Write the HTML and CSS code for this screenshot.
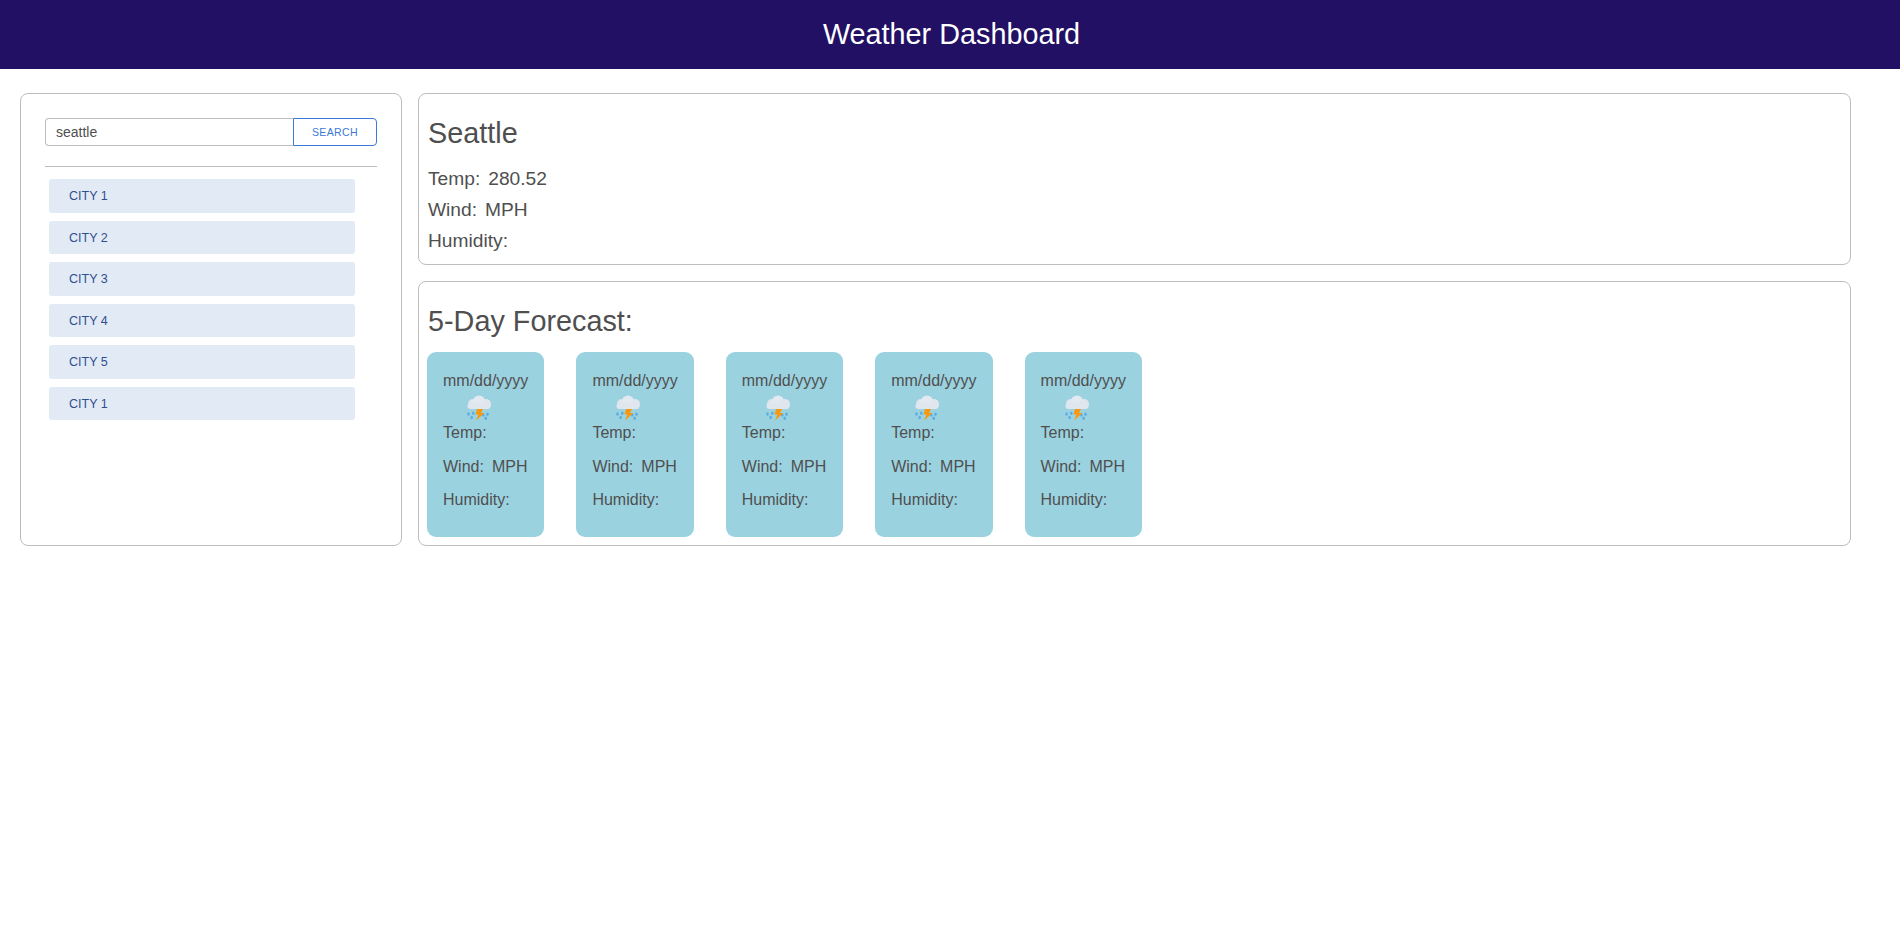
FILE: index.html
```html
<!DOCTYPE html>
<html lang="en">

<head>
    <meta charset="UTF-8">
    <meta name="viewport" content="width=device-width, initial-scale=1.0">
    <title>Weather Dashboard</title>
    <link rel="stylesheet" href="styles.css">
</head>

<body>
    <svg class="icon-defs" width="0" height="0" aria-hidden="true">
        <symbol id="storm" viewBox="0 0 26 26">
            <circle cx="7" cy="9" r="5" fill="#dfe6ee" />
            <circle cx="13" cy="6.500" r="6" fill="#e3e9f0" />
            <circle cx="20" cy="9" r="5" fill="#dfe6ee" />
            <rect x="1.500" y="8" width="23" height="6" rx="3" fill="#dfe6ee" />
            <ellipse cx="2.500" cy="19" rx="1.300" ry="1.700" fill="#5dade2" />
            <ellipse cx="7.300" cy="18.300" rx="1.300" ry="1.700" fill="#5dade2" />
            <ellipse cx="5.700" cy="22.500" rx="1.300" ry="1.700" fill="#5dade2" />
            <ellipse cx="17.300" cy="20" rx="1.300" ry="1.700" fill="#5dade2" />
            <ellipse cx="21.500" cy="19.300" rx="1.300" ry="1.700" fill="#5dade2" />
            <ellipse cx="19.700" cy="23.300" rx="1.300" ry="1.700" fill="#5dade2" />
            <path d="M11 14h6l-2 4h3.500l-8.500 7.500 2.500-6h-3z" fill="#f7980f" />
        </symbol>
    </svg>

    <header class="top-bar">
        <h1>Weather Dashboard</h1>
    </header>

    <main class="container">
        <aside class="panel search-panel">
            <form class="search-form">
                <input type="text" value="seattle">
                <button type="button">SEARCH</button>
            </form>
            <hr>
            <ul class="city-list">
                <li>CITY 1</li>
                <li>CITY 2</li>
                <li>CITY 3</li>
                <li>CITY 4</li>
                <li>CITY 5</li>
                <li>CITY 1</li>
            </ul>
        </aside>

        <section class="results">
            <div class="panel current">
                <h2>Seattle</h2>
                <p><span>Temp:</span> <span>280.52</span></p>
                <p><span>Wind:</span> <span>MPH</span></p>
                <p><span>Humidity:</span></p>
            </div>

            <div class="panel forecast">
                <h2>5-Day Forecast:</h2>
                <div class="day-list">
                    <div class="day-card">
                        <div class="day-date">mm/dd/yyyy</div>
                        <svg class="day-icon"><use href="#storm" /></svg>
                        <p>Temp:</p>
                        <p><span>Wind:</span> <span>MPH</span></p>
                        <p>Humidity:</p>
                    </div>
                    <div class="day-card">
                        <div class="day-date">mm/dd/yyyy</div>
                        <svg class="day-icon"><use href="#storm" /></svg>
                        <p>Temp:</p>
                        <p><span>Wind:</span> <span>MPH</span></p>
                        <p>Humidity:</p>
                    </div>
                    <div class="day-card">
                        <div class="day-date">mm/dd/yyyy</div>
                        <svg class="day-icon"><use href="#storm" /></svg>
                        <p>Temp:</p>
                        <p><span>Wind:</span> <span>MPH</span></p>
                        <p>Humidity:</p>
                    </div>
                    <div class="day-card">
                        <div class="day-date">mm/dd/yyyy</div>
                        <svg class="day-icon"><use href="#storm" /></svg>
                        <p>Temp:</p>
                        <p><span>Wind:</span> <span>MPH</span></p>
                        <p>Humidity:</p>
                    </div>
                    <div class="day-card">
                        <div class="day-date">mm/dd/yyyy</div>
                        <svg class="day-icon"><use href="#storm" /></svg>
                        <p>Temp:</p>
                        <p><span>Wind:</span> <span>MPH</span></p>
                        <p>Humidity:</p>
                    </div>
                </div>
            </div>
        </section>
    </main>
</body>

</html>
```

FILE: styles.css
```css
body {
    font-family: "Liberation Sans", Arial, sans-serif;
    margin: 0;
    padding: 0;
    background-color: #fff;
    color: #4f4f4f;
}

.icon-defs {
    display: block;
    height: 0;
}

.top-bar {
    height: 69px;
    padding-left: 3px;
    display: flex;
    justify-content: center;
    align-items: center;
    background-color: #211063;
}

.top-bar h1 {
    margin: 0;
    font-size: 28.800px;
    font-weight: 400;
    color: #fff;
}

.container {
    display: flex;
    gap: 16px;
    width: 1832px;
    margin: 24px 0 0 20px;
}

.panel {
    box-sizing: border-box;
    border: 1px solid #bdbdbd;
    border-radius: 8px;
    background-color: #fff;
}

.search-panel {
    width: 382px;
    height: 453px;
    padding: 24px;
}

.search-form {
    display: flex;
    height: 28px;
}

.search-form input {
    box-sizing: border-box;
    width: 248px;
    height: 28px;
    padding: 0 10px;
    border: 1px solid #bdbdbd;
    border-right: none;
    border-radius: 4px 0 0 4px;
    font-family: "Liberation Sans", Arial, sans-serif;
    font-size: 14px;
    color: #4f4f4f;
}

.search-form button {
    box-sizing: border-box;
    width: 84px;
    height: 28px;
    padding: 0;
    background-color: #fff;
    border: 1px solid #3c78d8;
    border-radius: 0 4px 4px 0;
    font-family: "Liberation Sans", Arial, sans-serif;
    font-size: 10.500px;
    letter-spacing: 0.4px;
    color: #3c78d8;
    cursor: pointer;
}

hr {
    width: 332px;
    height: 1px;
    margin: 20px 0 12px;
    border: none;
    background-color: #bdbdbd;
}

.city-list {
    list-style: none;
    width: 306px;
    margin: 0 0 0 4px;
    padding: 0;
    display: flex;
    flex-direction: column;
    gap: 8px;
}

.city-list li {
    height: 33.500px;
    line-height: 35.500px;
    padding-left: 20px;
    background-color: #e2eaf5;
    border-radius: 3px;
    font-size: 12.500px;
    color: #2f4f8f;
}

.results {
    width: 1433px;
    display: flex;
    flex-direction: column;
    gap: 16px;
}

.results h2 {
    margin: 0;
    font-size: 28.800px;
    line-height: 32px;
    font-weight: 400;
}

.current {
    height: 172px;
    padding: 23px 9px 0;
}

.current p {
    display: flex;
    gap: 8px;
    margin: 0;
    font-size: 19.200px;
    line-height: 31px;
}

.current h2 {
    margin-bottom: 14px;
}

.forecast {
    height: 265px;
    padding: 23px 8px 0;
}

.forecast h2 {
    margin: 0 0 15px 1px;
}

.day-list {
    display: flex;
    gap: 32px;
}

.day-card {
    box-sizing: border-box;
    width: 117.400px;
    height: 185px;
    padding: 19px 16px 0;
    background-color: #9bd2e0;
    border-radius: 9px;
    font-size: 16px;
    white-space: nowrap;
}

.day-date {
    line-height: 20px;
}

.day-icon {
    display: block;
    width: 26px;
    height: 26px;
    margin: 4px 0 2px 23px;
}

.day-card p {
    display: flex;
    gap: 8px;
    margin: 0;
    height: 33.500px;
    line-height: 20px;
}
```
